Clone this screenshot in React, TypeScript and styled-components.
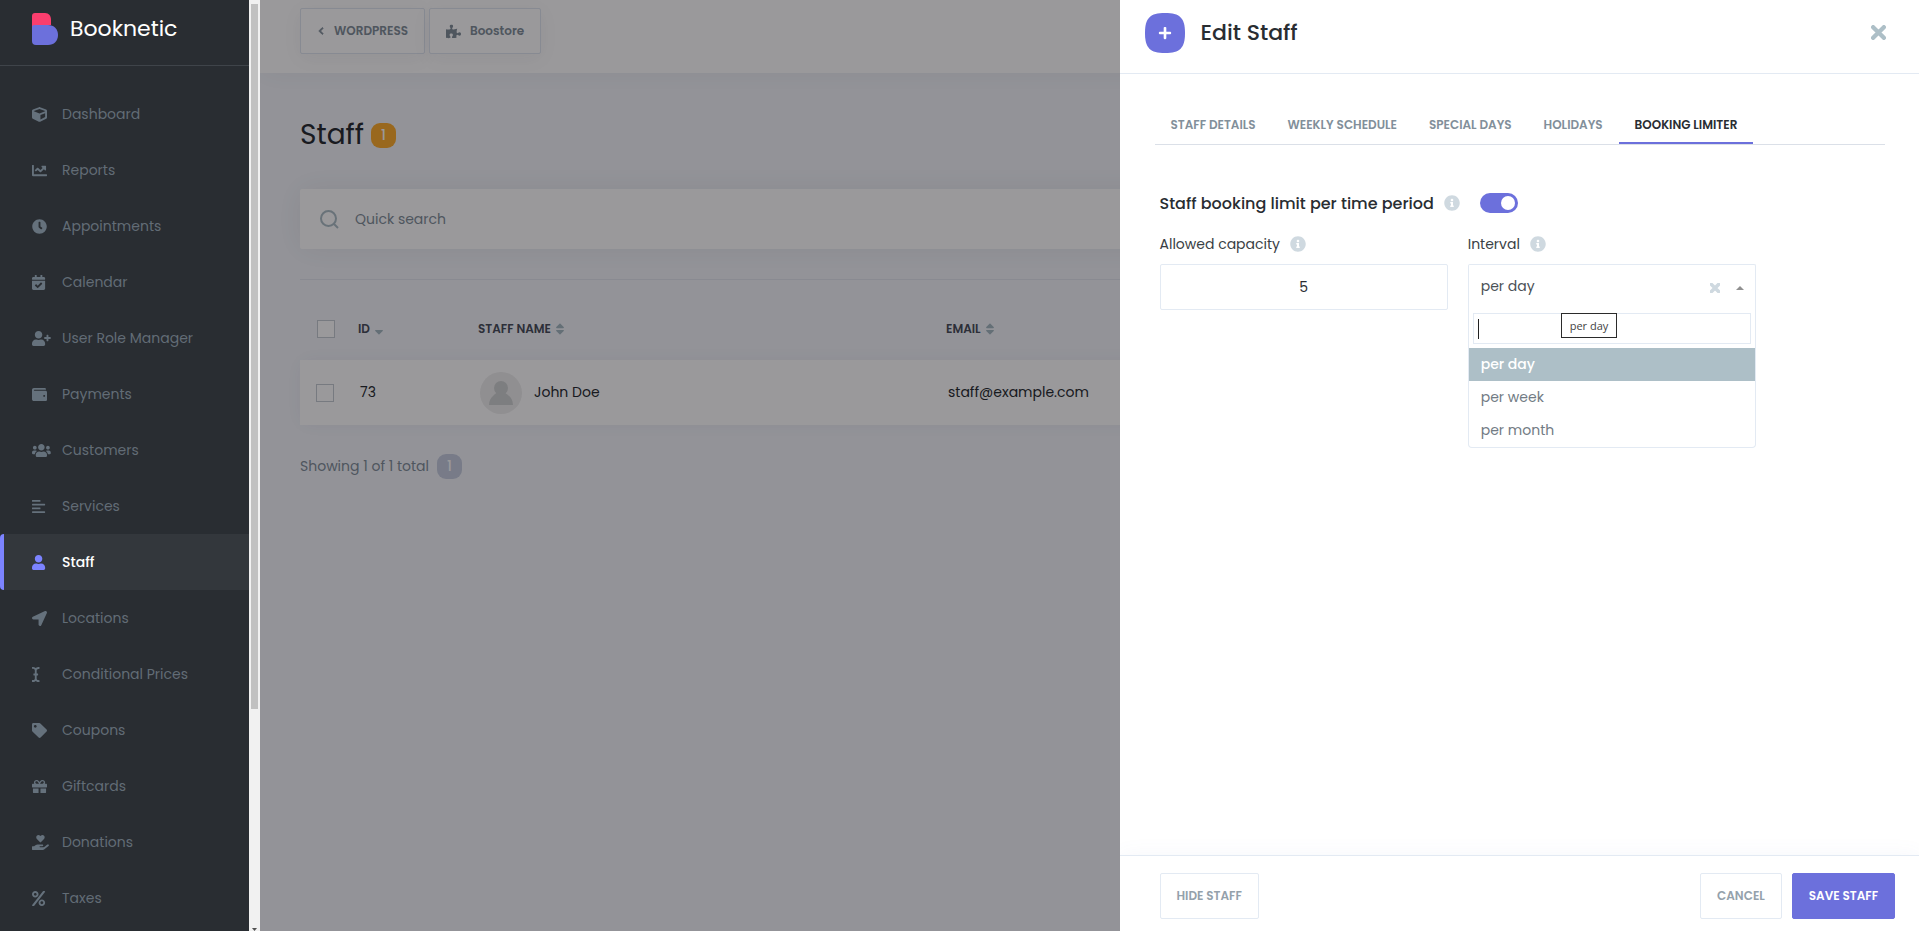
import React, { useState } from "react";
import styled, { createGlobalStyle, css } from "styled-components";
import type { IconType } from "react-icons";
import {
  FaAlignLeft,
  FaCalendarCheck,
  FaChartLine,
  FaChevronLeft,
  FaClock,
  FaCube,
  FaGift,
  FaHandHoldingHeart,
  FaICursor,
  FaInfoCircle,
  FaLocationArrow,
  FaPercent,
  FaPlus,
  FaPuzzlePiece,
  FaSort,
  FaSortDown,
  FaTag,
  FaUser,
  FaUserPlus,
  FaUsers,
  FaWallet,
} from "react-icons/fa";

const colors = {
  ink: "#292d32",
  slate: "#626c76",
  muted: "#828f9a",
  pale: "#adbfc7",
  line: "#e3eaf3",
  violet: "#6c70dc",
};

const GlobalStyle = createGlobalStyle`
  *, *::before, *::after { box-sizing: border-box; }
  body {
    margin: 0;
    background: #f4f6fb;
    color: ${colors.ink};
    font-family: Poppins, Inter, "Liberation Sans", sans-serif;
    font-size: 14px;
    overflow: hidden;
  }
  button, input { font: inherit; color: inherit; margin: 0; }
  button { cursor: pointer; }
`;

const Shell = styled.div`
  display: flex;
  height: 100vh;
  overflow: hidden;
`;

/* Sidebar */

const Sidebar = styled.aside`
  display: flex;
  flex: none;
  width: 260px;
  background: #292d32;
`;

const SidebarBody = styled.div`
  flex: 1;
  min-width: 0;
  overflow: hidden;
`;

const Brand = styled.a`
  display: flex;
  align-items: center;
  gap: 12px;
  height: 66px;
  padding: 0 32px 8px;
  border-bottom: 1px solid #3f444a;
  color: #fff;
  font-size: 22px;
  text-decoration: none;
`;

const Nav = styled.nav`
  padding-top: 20px;
`;

const NavLink = styled.a<{ $active?: boolean }>`
  display: flex;
  align-items: center;
  height: 56px;
  padding-left: 28px;
  border-left: 4px solid transparent;
  color: ${colors.slate};
  font-size: 14px;
  text-decoration: none;
  ${(p) =>
    p.$active &&
    css`
      background: #33373c;
      color: #fff;
      border-left-color: #7c83ff;
      border-radius: 4px 0 0 4px;
      font-weight: 500;
    `}
`;

const NavIcon = styled.span<{ $active?: boolean }>`
  display: flex;
  width: 30px;
  color: ${(p) => (p.$active ? "#7c83ff" : "#65717c")};
  svg {
    width: 19px;
    height: 15px;
  }
`;

const Scrollbar = styled.div`
  display: flex;
  flex-direction: column;
  align-items: center;
  justify-content: space-between;
  width: 11px;
  padding-top: 4px;
  background: #f1f1f1;
`;

const Thumb = styled.div`
  width: 7px;
  height: 76%;
  background: #c1c1c1;
`;

const ScrollArrow = styled.div`
  width: 5px;
  height: 3px;
  background: #505050;
  clip-path: polygon(0 0, 100% 0, 50% 100%);
`;

/* Page behind the panel */

const Main = styled.main`
  flex: 1;
  min-width: 0;
  overflow: hidden;
`;

const TopBar = styled.header`
  display: flex;
  gap: 4px;
  height: 73px;
  padding: 8px 40px 0;
  background: #fff;
  box-shadow: 0 0 30px rgba(41, 45, 50, 0.06);
`;

const TopButton = styled.button`
  display: flex;
  align-items: center;
  gap: 9px;
  height: 46px;
  padding: 0 16px;
  border: 1px solid #dfe6f0;
  border-radius: 2px;
  background: #fff;
  box-shadow: 0 4px 20px rgba(41, 45, 50, 0.05);
  color: ${colors.muted};
  font-size: 12px;
  font-weight: 600;
`;

const Content = styled.div`
  padding: 0 40px;
`;

const PageTitle = styled.h1`
  display: flex;
  align-items: center;
  gap: 7px;
  height: 40px;
  margin: 42px 0 34px;
  font-size: 28px;
  font-weight: 400;
`;

const Badge = styled.span<{ $tone: string }>`
  display: grid;
  place-items: center;
  width: 25px;
  height: 25px;
  border-radius: 9px;
  background: ${(p) => p.$tone};
  color: #fff;
  font-size: 14px;
  font-weight: 500;
`;

const SearchBar = styled.label`
  display: flex;
  align-items: center;
  gap: 14px;
  height: 60px;
  padding: 0 20px;
  border-radius: 2px;
  background: #fff;
  box-shadow: 0 0 30px rgba(41, 45, 50, 0.08);
`;

const SearchInput = styled.input`
  flex: 1;
  border: 0;
  outline: 0;
  background: transparent;
  font-size: 14px;
  &::placeholder {
    color: ${colors.muted};
    opacity: 1;
  }
`;

const Rule = styled.hr`
  height: 1px;
  margin: 30px 0;
  border: 0;
  background: #e3e7ee;
`;

const StaffTable = styled.table`
  width: 100%;
  table-layout: fixed;
  border-collapse: collapse;
  text-align: left;

  th {
    height: 50px;
    padding: 0 0 12px;
    font-size: 12px;
    font-weight: 600;
    color: #4a4f5c;
  }
  tbody tr {
    background: #fff;
    box-shadow: 0 0 20px rgba(41, 45, 50, 0.05);
  }
  td {
    height: 65px;
    padding: 0 0 0 2px;
    font-size: 14px;
  }
  th:first-child { padding-left: 17px; }
  td:first-child { padding-left: 16px; }
`;

const Col = styled.col<{ $width?: number }>`
  width: ${(p) => (p.$width ? `${p.$width}px` : "auto")};
`;

const HeadLabel = styled.span`
  display: inline-flex;
  align-items: center;
  gap: 2px;
  svg { color: #a5b9c2; }
`;

const Tick = styled.input`
  display: block;
  appearance: none;
  width: 18px;
  height: 18px;
  border: 1px solid #c5ccd3;
  background: #fff;
`;

const Person = styled.div`
  display: flex;
  align-items: center;
  gap: 12px;
`;

const TableFoot = styled.p`
  display: flex;
  align-items: center;
  gap: 8px;
  margin: 29px 0 0;
  color: ${colors.muted};
  font-size: 14px;
`;

const Backdrop = styled.div`
  position: fixed;
  inset: 0 0 0 260px;
  background: rgba(2, 0, 6, 0.4);
`;

/* Edit panel */

const Panel = styled.section`
  position: fixed;
  inset: 0 0 0 auto;
  display: flex;
  flex-direction: column;
  width: calc((100% - 320px) / 2);
  overflow: hidden;
  background: #fff;
`;

const PanelHeader = styled.header`
  display: flex;
  align-items: center;
  gap: 16px;
  height: 74px;
  padding: 0 33px 8px 25px;
  border-bottom: 1px solid ${colors.line};
`;

const PanelMark = styled.span`
  display: grid;
  width: 40px;
  height: 40px;
  svg { grid-area: 1 / 1; place-self: center; }
`;

const PanelTitle = styled.h2`
  flex: 1;
  margin: 0;
  font-size: 22px;
  font-weight: 500;
`;

const IconButton = styled.button<{ $tone: string }>`
  display: flex;
  padding: 0;
  border: 0;
  background: none;
  color: ${(p) => p.$tone};
`;

const PanelBody = styled.div`
  flex: 1;
  padding: 31px 34px 0 35px;
`;

const Tabs = styled.div`
  display: flex;
  height: 40px;
  border-bottom: 1px solid #dbe0e8;
`;

const Tab = styled.button<{ $active?: boolean }>`
  padding: 2px 16px 0;
  border: 0;
  border-bottom: 2px solid ${(p) => (p.$active ? colors.violet : "transparent")};
  background: none;
  color: ${(p) => (p.$active ? colors.ink : colors.muted)};
  font-size: 12px;
  font-weight: 600;
  white-space: nowrap;
`;

const Form = styled.form`
  padding: 47px 5px 0;
`;

const SwitchRow = styled.div`
  display: flex;
  align-items: center;
  height: 22px;
  font-size: 16px;
  font-weight: 500;
`;

const Info = styled(FaInfoCircle)`
  flex: none;
  width: 16px;
  height: 16px;
  margin-left: 10px;
  color: #cfd9e0;
`;

const Switch = styled.input`
  appearance: none;
  display: flex;
  align-items: center;
  width: 38px;
  height: 20px;
  margin: 0 0 0 20px !important;
  padding: 0 3px;
  border-radius: 10px;
  background: ${colors.pale};
  &::before {
    content: "";
    width: 14px;
    height: 14px;
    border-radius: 50%;
    background: #fff;
  }
  &:checked {
    justify-content: flex-end;
    background: ${colors.violet};
  }
`;

const Fields = styled.div`
  display: grid;
  grid-template-columns: repeat(2, 40%);
  gap: 20px;
  margin-top: 20px;
`;

const Field = styled.div`
  position: relative;
`;

const FieldLabel = styled.label`
  display: flex;
  align-items: center;
  height: 20px;
  margin-bottom: 10px;
  color: #3a3f45;
  font-size: 14px;
`;

const NumberInput = styled.input`
  display: block;
  width: 100%;
  height: 46px;
  border: 1px solid ${colors.line};
  border-radius: 2px;
  outline: 0;
  background: #fff;
  font-size: 14px;
  text-align: center;
`;

const Select = styled.div`
  display: flex;
  align-items: center;
  gap: 16px;
  height: 46px;
  padding: 0 11px 0 12px;
  border: 1px solid ${colors.line};
  border-bottom: 0;
  border-radius: 2px 2px 0 0;
`;

const SelectValue = styled.button`
  flex: 1;
  padding: 0 0 2px;
  border: 0;
  background: none;
  color: #4b5157;
  font-size: 14px;
  text-align: left;
`;

const UpArrow = styled.svg`
  width: 8px;
  height: 4px;
  fill: #909090;
`;

const Dropdown = styled.div`
  position: absolute;
  top: 76px;
  left: 0;
  right: 0;
  border: 1px solid ${colors.line};
  border-top: 0;
  border-radius: 0 0 4px 4px;
  background: #fff;
`;

const FilterBox = styled.div`
  display: flex;
  align-items: center;
  height: 31px;
  margin: 3px 4px 4px;
  padding: 0 4px;
  border: 1px solid ${colors.line};
`;

const Caret = styled.span`
  width: 1px;
  height: 20px;
  background: #222;
`;

const FilterInput = styled.input`
  flex: 1;
  min-width: 0;
  border: 0;
  outline: 0;
  background: transparent;
`;

const Options = styled.ul`
  margin: 0;
  padding: 0;
  list-style: none;
`;

const Option = styled.li<{ $active?: boolean }>`
  display: flex;
  align-items: center;
  height: 33px;
  padding: 0 12px;
  background: ${(p) => (p.$active ? colors.pale : "transparent")};
  color: ${(p) => (p.$active ? "#fff" : "#727b84")};
  font-size: 14px;
  font-weight: ${(p) => (p.$active ? 500 : 400)};
`;

const Tooltip = styled.span`
  position: absolute;
  top: 79px;
  left: 93px;
  padding: 0 8px;
  border: 1px solid #2b2b2b;
  background: #fff;
  color: #444;
  font-family: "Open Sans", "Noto Sans", sans-serif;
  font-size: 11px;
  line-height: 23px;
`;

const PanelFooter = styled.footer`
  display: flex;
  gap: 10px;
  padding: 17px 24px 12px 40px;
  border-top: 1px solid ${colors.line};
  box-shadow: 0 0 20px rgba(108, 112, 180, 0.06);
`;

const ActionButton = styled.button<{ $primary?: boolean; $push?: boolean }>`
  height: 46px;
  margin-left: ${(p) => (p.$push ? "auto" : 0)};
  padding: 0 16px;
  border: 1px solid ${(p) => (p.$primary ? colors.violet : colors.line)};
  border-radius: 2px;
  background: ${(p) => (p.$primary ? colors.violet : "#fff")};
  color: ${(p) => (p.$primary ? "#fff" : "#94a1ab")};
  font-size: 12px;
  font-weight: 600;
`;

const navItems: { label: string; icon: IconType }[] = [
  { label: "Dashboard", icon: FaCube },
  { label: "Reports", icon: FaChartLine },
  { label: "Appointments", icon: FaClock },
  { label: "Calendar", icon: FaCalendarCheck },
  { label: "User Role Manager", icon: FaUserPlus },
  { label: "Payments", icon: FaWallet },
  { label: "Customers", icon: FaUsers },
  { label: "Services", icon: FaAlignLeft },
  { label: "Staff", icon: FaUser },
  { label: "Locations", icon: FaLocationArrow },
  { label: "Conditional Prices", icon: FaICursor },
  { label: "Coupons", icon: FaTag },
  { label: "Giftcards", icon: FaGift },
  { label: "Donations", icon: FaHandHoldingHeart },
  { label: "Taxes", icon: FaPercent },
];

const tabs = ["STAFF DETAILS", "WEEKLY SCHEDULE", "SPECIAL DAYS", "HOLIDAYS", "BOOKING LIMITER"];
const intervals = ["per day", "per week", "per month"];

const Logo = () => (
  <svg width="26" height="32" viewBox="0 0 26 32" aria-hidden="true">
    <path d="M0 12h16c6 0 10 4 10 10s-4 10-10 10H4a4 4 0 0 1-4-4z" fill="#6c70dc" />
    <path d="M3 0h10c4 0 6 3 6 7v5H4c-2 0-4 0-4 2V3a3 3 0 0 1 3-3z" fill="#fb3e6e" />
  </svg>
);

const SearchIcon = () => (
  <svg width="19" height="19" viewBox="0 0 19 19" fill="none" stroke="#adbfc7" strokeWidth="2" aria-hidden="true">
    <circle cx="8.500" cy="8.500" r="7.500" />
    <path d="M13.500 13.500 18 18" />
  </svg>
);

const Cross = ({ size, weight = 4 }: { size: number; weight?: number }) => (
  <svg width={size} height={size} viewBox="0 0 14 14" stroke="currentColor" strokeWidth={weight} aria-hidden="true">
    <path d="M2 2l10 10M12 2 2 12" strokeLinecap={weight > 4 ? "square" : "round"} />
  </svg>
);

const Avatar = () => (
  <svg width="42" height="42" viewBox="0 0 42 42" aria-hidden="true">
    <circle cx="21" cy="21" r="21" fill="#efefef" />
    <circle cx="21" cy="16" r="7" fill="#cfd2d2" />
    <path d="M17 20h8c0 2 8 4 8 13H9c0-9 8-11 8-13z" fill="#cfd2d2" />
  </svg>
);

export default function App() {
  const [tab, setTab] = useState("BOOKING LIMITER");
  const [limited, setLimited] = useState(true);
  const [capacity, setCapacity] = useState("5");
  const [interval, setInterval] = useState("per day");

  return (
    <>
      <GlobalStyle />
      <Shell>
        <Sidebar>
          <SidebarBody>
            <Brand href="#">
              <Logo />
              Booknetic
            </Brand>
            <Nav aria-label="Main">
              {navItems.map(({ label, icon: Icon }) => {
                const active = label === "Staff";
                return (
                  <NavLink key={label} href="#" $active={active} aria-current={active ? "page" : undefined}>
                    <NavIcon $active={active}>
                      <Icon preserveAspectRatio="xMinYMid" />
                    </NavIcon>
                    {label}
                  </NavLink>
                );
              })}
            </Nav>
          </SidebarBody>
          <Scrollbar aria-hidden="true">
            <Thumb />
            <ScrollArrow />
          </Scrollbar>
        </Sidebar>

        <Main>
          <TopBar>
            <TopButton type="button">
              <FaChevronLeft size={8} strokeWidth={50} />
              WORDPRESS
            </TopButton>
            <TopButton type="button">
              <FaPuzzlePiece size={15} />
              Boostore
            </TopButton>
          </TopBar>
          <Content>
            <PageTitle>
              Staff <Badge $tone="#fdae2f">1</Badge>
            </PageTitle>
            <SearchBar>
              <SearchIcon />
              <SearchInput type="search" placeholder="Quick search" aria-label="Quick search" />
            </SearchBar>
            <Rule />
            <StaffTable>
              <colgroup>
                <Col $width={58} />
                <Col $width={120} />
                <Col $width={468} />
                <Col />
              </colgroup>
              <thead>
                <tr>
                  <th><Tick type="checkbox" aria-label="Select all staff" /></th>
                  <th><HeadLabel>ID <FaSortDown size={14} /></HeadLabel></th>
                  <th><HeadLabel>STAFF NAME <FaSort size={14} /></HeadLabel></th>
                  <th><HeadLabel>EMAIL <FaSort size={14} /></HeadLabel></th>
                </tr>
              </thead>
              <tbody>
                <tr>
                  <td><Tick type="checkbox" aria-label="Select John Doe" /></td>
                  <td>73</td>
                  <td><Person><Avatar />John Doe</Person></td>
                  <td>staff@example.com</td>
                </tr>
              </tbody>
            </StaffTable>
            <TableFoot>
              Showing 1 of 1 total <Badge $tone="#c6cee0">1</Badge>
            </TableFoot>
          </Content>
        </Main>
      </Shell>

      <Backdrop />

      <Panel role="dialog" aria-labelledby="panel-title">
        <PanelHeader>
          <PanelMark>
            <svg width="40" height="40" viewBox="0 0 40 40" aria-hidden="true">
              <path d="M20 0c15 0 20 5 20 20s-5 20-20 20S0 35 0 20 5 0 20 0z" fill={colors.violet} />
            </svg>
            <FaPlus size={14} color="#fff" />
          </PanelMark>
          <PanelTitle id="panel-title">Edit Staff</PanelTitle>
          <IconButton type="button" $tone={colors.pale} aria-label="Close">
            <Cross size={15} />
          </IconButton>
        </PanelHeader>

        <PanelBody>
          <Tabs role="tablist">
            {tabs.map((name) => (
              <Tab
                key={name}
                type="button"
                role="tab"
                aria-selected={name === tab}
                $active={name === tab}
                onClick={() => setTab(name)}
              >
                {name}
              </Tab>
            ))}
          </Tabs>

          <Form>
            <SwitchRow>
              <label htmlFor="limit">Staff booking limit per time period</label>
              <Info />
              <Switch
                id="limit"
                type="checkbox"
                role="switch"
                checked={limited}
                onChange={(e) => setLimited(e.target.checked)}
              />
            </SwitchRow>
            <Fields>
              <Field>
                <FieldLabel htmlFor="capacity">Allowed capacity <Info /></FieldLabel>
                <NumberInput id="capacity" value={capacity} onChange={(e) => setCapacity(e.target.value)} />
              </Field>
              <Field>
                <FieldLabel htmlFor="interval">Interval <Info /></FieldLabel>
                <Select>
                  <SelectValue
                    id="interval"
                    type="button"
                    role="combobox"
                    aria-haspopup="listbox"
                    aria-expanded="true"
                    aria-controls="interval-options"
                  >
                    {interval}
                  </SelectValue>
                  <IconButton type="button" $tone="#cfd9e0" aria-label="Clear interval">
                    <Cross size={10} weight={5} />
                  </IconButton>
                  <UpArrow viewBox="0 0 8 4" aria-hidden="true">
                    <path d="M4 0l4 4H0z" />
                  </UpArrow>
                </Select>
                <Dropdown>
                  <FilterBox>
                    <Caret />
                    <FilterInput type="text" aria-label="Filter intervals" />
                  </FilterBox>
                  <Options id="interval-options" role="listbox" aria-label="Interval">
                    {intervals.map((name) => (
                      <Option
                        key={name}
                        role="option"
                        aria-selected={name === interval}
                        $active={name === interval}
                        onClick={() => setInterval(name)}
                      >
                        {name}
                      </Option>
                    ))}
                  </Options>
                </Dropdown>
                <Tooltip role="tooltip">per day</Tooltip>
              </Field>
            </Fields>
          </Form>
        </PanelBody>

        <PanelFooter>
          <ActionButton type="button">HIDE STAFF</ActionButton>
          <ActionButton type="button" $push>CANCEL</ActionButton>
          <ActionButton type="button" $primary>SAVE STAFF</ActionButton>
        </PanelFooter>
      </Panel>
    </>
  );
}
